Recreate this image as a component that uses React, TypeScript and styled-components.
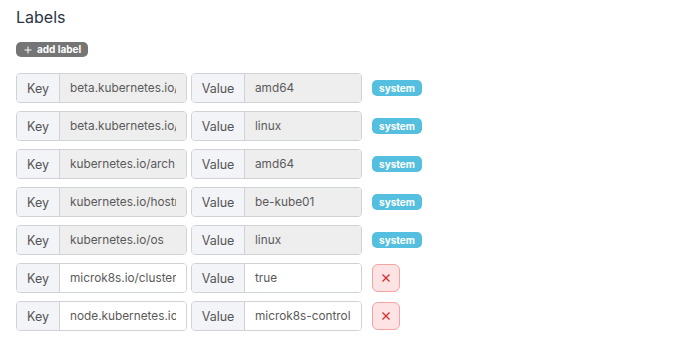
import React from "react";
import styled, { createGlobalStyle } from "styled-components";

const Global = createGlobalStyle`
  html, body { margin: 0; padding: 0; background: #fff; }
  body { font-family: Inter, "Noto Sans", sans-serif; }
`;

const Page = styled.div`
  padding: 7px 16px 0 16px;
  display: flex;
  flex-direction: column;
`;

const Title = styled.h3`
  margin: 0;
  font-size: 16px;
  font-weight: 400;
  color: #2b3445;
  line-height: 20px;
`;

const AddButton = styled.button`
  margin-top: 15px;
  align-self: flex-start;
  display: inline-flex;
  align-items: center;
  gap: 5px;
  height: 15px;
  padding: 0 7px 0 8px;
  border: none;
  border-radius: 5px;
  background: #757575;
  color: #fff;
  font-family: Inter, sans-serif;
  font-weight: 700;
  font-size: 10px;
  line-height: 15px;
  cursor: pointer;
`;

const Rows = styled.div`
  margin-top: 16px;
  display: flex;
  flex-direction: column;
  gap: 8px;
`;

const Row = styled.div`
  display: flex;
  align-items: center;
  gap: 4px;
`;

const Group = styled.div`
  display: flex;
  width: 171px;
  height: 30px;
  box-sizing: border-box;
  border: 1px solid #cfd3d8;
  border-radius: 4px;
  overflow: hidden;
`;

const Addon = styled.span<{ $w: number }>`
  flex: 0 0 ${(p) => p.$w}px;
  box-sizing: border-box;
  display: flex;
  align-items: center;
  justify-content: center;
  background: #f3f4f8;
  border-right: 1px solid #cfd3d8;
  color: #555;
  font-size: 12.5px;
`;

const Field = styled.div<{ $disabled: boolean }>`
  flex: 1;
  min-width: 0;
  box-sizing: border-box;
  display: flex;
  align-items: center;
  padding: 0 10px;
  background: ${(p) => (p.$disabled ? "#eeeeee" : "#ffffff")};
`;

const FieldText = styled.span`
  display: block;
  min-width: 0;
  flex: 1;
  overflow: hidden;
  white-space: nowrap;
  color: #5a5a5a;
  font-size: 11.8px;
  line-height: 16px;
`;

const Badge = styled.span`
  margin-left: 6px;
  display: inline-flex;
  align-items: center;
  justify-content: center;
  width: 50px;
  height: 16px;
  border-radius: 5px;
  background: #55bfdf;
  color: #fff;
  font-weight: 700;
  font-size: 10px;
`;

const DeleteButton = styled.button`
  margin-left: 6px;
  width: 28px;
  height: 28px;
  box-sizing: border-box;
  border: 1px solid #f5a3a3;
  border-radius: 6px;
  background: #fde3e3;
  display: flex;
  align-items: center;
  justify-content: center;
  padding: 0;
  cursor: pointer;
`;

type Label = { k: string; v: string; system: boolean };

const labels: Label[] = [
  { k: "beta.kubernetes.io/arch", v: "amd64", system: true },
  { k: "beta.kubernetes.io/os", v: "linux", system: true },
  { k: "kubernetes.io/arch", v: "amd64", system: true },
  { k: "kubernetes.io/hostname", v: "be-kube01", system: true },
  { k: "kubernetes.io/os", v: "linux", system: true },
  { k: "microk8s.io/cluster", v: "true", system: false },
  { k: "node.kubernetes.io/microk8s-controlplane", v: "microk8s-controlplane", system: false },
];

export default function App() {
  return (
    <>
      <Global />
      <Page>
        <Title>Labels</Title>
        <AddButton>
          <svg width="8" height="8" viewBox="0 0 8 8">
            <path d="M4 0.5v7M0.5 4h7" stroke="#fff" strokeWidth="1" />
          </svg>
          add label
        </AddButton>
        <Rows>
          {labels.map((l, i) => (
            <Row key={i}>
              <Group>
                <Addon $w={43}>Key</Addon>
                <Field $disabled={l.system}>
                  <FieldText>{l.k}</FieldText>
                </Field>
              </Group>
              <Group>
                <Addon $w={53}>Value</Addon>
                <Field $disabled={l.system}>
                  <FieldText>{l.v}</FieldText>
                </Field>
              </Group>
              {l.system ? (
                <Badge>system</Badge>
              ) : (
                <DeleteButton>
                  <svg width="10" height="10" viewBox="0 0 10 10">
                    <path d="M1.5 1.5l7 7M8.5 1.5l-7 7" stroke="#d32f2f" strokeWidth="1.3" />
                  </svg>
                </DeleteButton>
              )}
            </Row>
          ))}
        </Rows>
      </Page>
    </>
  );
}
